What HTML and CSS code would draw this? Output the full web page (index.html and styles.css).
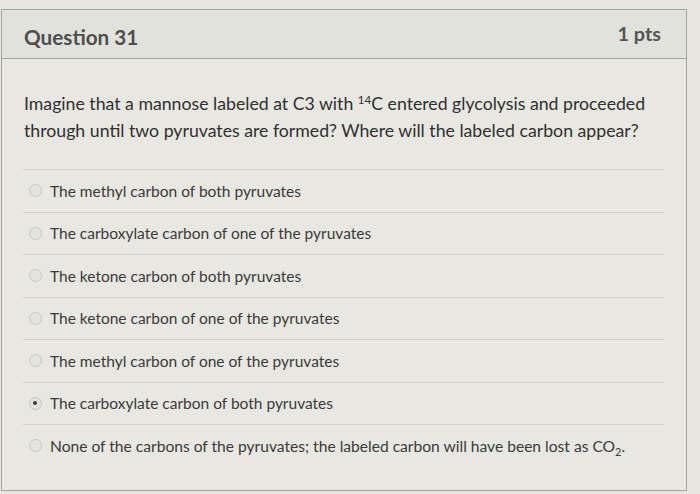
FILE: index.html
```html
<!DOCTYPE html>
<html>
<head>
<meta charset="utf-8">
<link rel="stylesheet" href="styles.css">
</head>
<body>
<div class="card">
  <div class="header">
    <div class="title">Question 31</div>
    <div class="pts">1 pts</div>
  </div>
  <div class="content">
    <p class="question">Imagine that a mannose labeled at C3 with <sup>14</sup>C entered glycolysis and proceeded through until two pyruvates are formed? Where will the labeled carbon appear?</p>
    <div class="answers">
      <div class="answer"><span class="radio"></span><span class="label">The methyl carbon of both pyruvates</span></div>
      <div class="answer"><span class="radio"></span><span class="label">The carboxylate carbon of one of the pyruvates</span></div>
      <div class="answer"><span class="radio"></span><span class="label">The ketone carbon of both pyruvates</span></div>
      <div class="answer"><span class="radio"></span><span class="label">The ketone carbon of one of the pyruvates</span></div>
      <div class="answer"><span class="radio"></span><span class="label">The methyl carbon of one of the pyruvates</span></div>
      <div class="answer"><span class="radio checked"></span><span class="label">The carboxylate carbon of both pyruvates</span></div>
      <div class="answer"><span class="radio"></span><span class="label">None of the carbons of the pyruvates; the labeled carbon will have been lost as CO<sub>2</sub>.</span></div>
    </div>
  </div>
</div>
</body>
</html>
```
FILE: styles.css
```css
html, body {
  margin: 0;
  padding: 0;
  background: #e7e6e0;
}
body {
  font-family: Lato, "Open Sans", sans-serif;
  color: #3a3a3a;
  width: 700px;
  height: 494px;
  overflow: hidden;
}
.card {
  margin: 9px 0 0 1px;
  width: 686px;
  height: 482px;
  box-sizing: border-box;
  border: 1px solid #a3a39e;
  background: #e8e7e1;
}
.header {
  display: flex;
  justify-content: space-between;
  align-items: center;
  height: 49px;
  box-sizing: border-box;
  padding: 0 25px 0 22px;
  background: #e2e2dc;
  border-bottom: 1px solid #a3a39e;
}
.title {
  font-size: 20.7px;
  font-weight: 700;
  color: #4e4e4e;
  padding-top: 6px;
}
.pts {
  font-size: 19.8px;
  font-weight: 700;
  color: #555;
  padding-bottom: 2px;
}
.content {
  padding: 0 22px 0 21px;
}
.question {
  margin: 0;
  padding: 31px 0 25px 1px;
  font-size: 17.7px;
  line-height: 27px;
  color: #303030;
}
.question sup {
  font-size: 11.5px;
  line-height: 0;
  vertical-align: 6px;
}
.answer {
  display: flex;
  align-items: center;
  height: 42.5px;
  box-sizing: border-box;
  border-top: 1px solid #d2d2cc;
  font-size: 15.5px;
  color: #3b3b3b;
}
.answer:last-child {
  font-size: 15.6px;
}
.radio {
  width: 13px;
  height: 13px;
  border: 1.5px solid #c8c8c3;
  border-radius: 50%;
  margin: 0 8px 0 6px;
  box-sizing: border-box;
  background: #e4e4de;
  position: relative;
  flex: none;
}
.radio.checked {
  border-color: #c4c4bf;
}
.radio.checked::after {
  content: "";
  position: absolute;
  left: 3px;
  top: 3px;
  width: 4px;
  height: 4px;
  border-radius: 50%;
  background: #3a3a3a;
}
.label sub {
  font-size: 11px;
  line-height: 0;
  vertical-align: -4px;
}
```
